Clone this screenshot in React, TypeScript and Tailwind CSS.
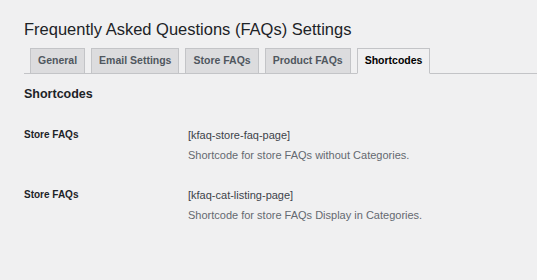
const tabs = ['General', 'Email Settings', 'Store FAQs', 'Product FAQs', 'Shortcodes'];

const rows = [
    { label: 'Store FAQs', code: '[kfaq-store-faq-page]', desc: 'Shortcode for store FAQs without Categories.' },
    { label: 'Store FAQs', code: '[kfaq-cat-listing-page]', desc: 'Shortcode for store FAQs Display in Categories.' },
];

export default function App() {
    const active = 'Shortcodes';

    return (
        <div className="min-h-screen bg-[#f0f0f1] pl-6 font-['Liberation_Sans',Arial,sans-serif]">
            {/* Page title */}
            <h1 className="pt-[17px] text-[16.5px] leading-[24px] font-normal text-[#1d2327]">
                Frequently Asked Questions (FAQs) Settings
            </h1>

            {/* Tabs */}
            <nav className="mt-[7px] flex border-b border-[#c3c4c7]">
                {tabs.map((t) =>
                    t === active ? (
                        <span
                            key={t}
                            className="-mb-px ml-[6px] flex h-[26px] items-center border border-[#c3c4c7] border-b-[#f0f0f1] bg-[#f0f0f1] px-[7px] text-[10.5px] font-bold text-black"
                        >
                            {t}
                        </span>
                    ) : (
                        <span
                            key={t}
                            className="-mb-px ml-[6px] flex h-[26px] items-center border border-[#c3c4c7] bg-[#dcdcde] px-[7px] text-[10.5px] font-bold text-[#50575e]"
                        >
                            {t}
                        </span>
                    )
                )}
            </nav>

            {/* Section */}
            <h2 className="mt-3 text-[12.5px] leading-[17px] font-bold text-[#1d2327]">Shortcodes</h2>

            <div className="mt-[22px] space-y-5">
                {rows.map((r, i) => (
                    <div key={i} className="flex">
                        <div className="w-[164px] shrink-0 text-[10px] leading-[20px] font-bold text-[#1d2327]">{r.label}</div>
                        <div className="text-[11px] leading-[20px]">
                            <p className="text-[#3c434a]">{r.code}</p>
                            <p className="text-[#646970]">{r.desc}</p>
                        </div>
                    </div>
                ))}
            </div>
        </div>
    );
}
